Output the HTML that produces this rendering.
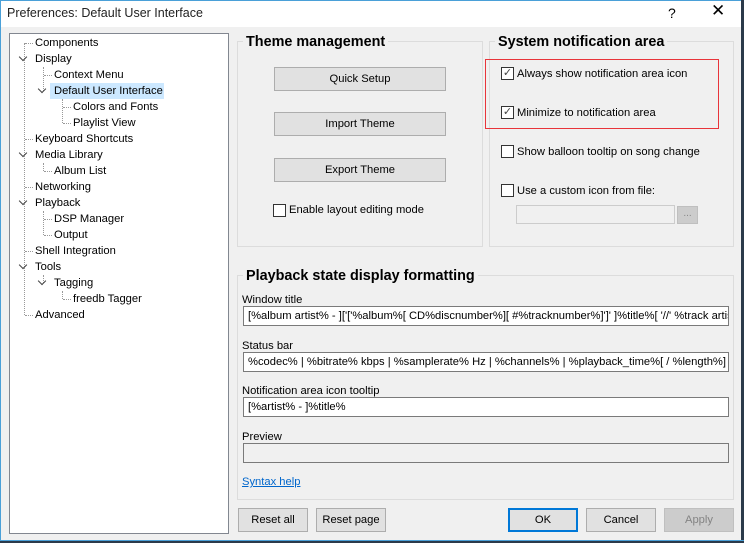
<!DOCTYPE html>
<html><head><style>
*{box-sizing:border-box}
body{margin:0;width:744px;height:543px;position:relative;background:#f0f0f0;font-family:"Liberation Sans",sans-serif;font-size:11.2px;color:#000;overflow:hidden}
.a{position:absolute}
.t{white-space:nowrap;line-height:16px}
.btn{position:absolute;background:#e1e1e1;border:1px solid #adadad;text-align:center;line-height:22px;font-size:11.2px}
.grp{position:absolute;border:1px solid #dcdcdc}
.gt{position:absolute;background:#f0f0f0;font-weight:bold;font-size:14.4px;padding:0 3px;line-height:18px}
.cb{position:absolute;width:13px;height:13px;border:1px solid #333;background:#fff}
.inp{position:absolute;background:#fff;border:1px solid #7a7a7a;height:20px;line-height:18px;padding-left:4px;white-space:nowrap;overflow:hidden;font-size:11.2px}
.chev{position:absolute;width:6px;height:6px;border-right:1.5px solid #444;border-bottom:1.5px solid #444;transform:rotate(45deg)}
.dv{position:absolute;border-left:1px dotted #999}
.dh{position:absolute;border-top:1px dotted #999;width:8px}
</style></head><body>
<div class="a" style="left:0;top:0;width:744px;height:27px;background:#fff;border-top:1px solid #4aa0d8"></div>
<div class="a t" style="left:7px;top:5px;font-size:12.5px;color:#222">Preferences: Default User Interface</div>
<div class="a t" style="left:668px;top:5px;font-size:14px">?</div>
<div class="a t" style="left:711px;top:3px;font-size:17px">✕</div>
<div class="a" style="left:0;top:0;width:1px;height:543px;background:#4aa0d8"></div>
<div class="a" style="left:741px;top:0;width:3px;height:543px;background:#2b3a4a"></div>
<div class="a" style="left:0;top:540px;width:744px;height:1px;background:#4aa0d8"></div>
<div class="a" style="left:0;top:541px;width:744px;height:2px;background:#2b3a4a"></div>

<!-- tree -->
<div class="a" style="left:9px;top:33px;width:220px;height:501px;background:#fff;border:1px solid #828790"></div>
<div class="a" style="left:50px;top:83px;width:114px;height:16px;background:#cce8ff"></div>
<div class="dv" style="left:24px;top:43px;height:272px"></div>
<div class="dv" style="left:43px;top:67px;height:24px"></div>
<div class="dv" style="left:62px;top:99px;height:24px"></div>
<div class="dv" style="left:43px;top:163px;height:8px"></div>
<div class="dv" style="left:43px;top:211px;height:24px"></div>
<div class="dv" style="left:43px;top:275px;height:8px"></div>
<div class="dv" style="left:62px;top:291px;height:8px"></div>
<div class="dh" style="left:25px;top:43px"></div><div class="dh" style="left:25px;top:139px"></div><div class="dh" style="left:25px;top:187px"></div><div class="dh" style="left:25px;top:251px"></div><div class="dh" style="left:25px;top:315px"></div>
<div class="dh" style="left:44px;top:75px"></div><div class="dh" style="left:44px;top:171px"></div><div class="dh" style="left:44px;top:219px"></div><div class="dh" style="left:44px;top:235px"></div>
<div class="dh" style="left:63px;top:107px"></div><div class="dh" style="left:63px;top:123px"></div><div class="dh" style="left:63px;top:299px"></div>
<div class="chev" style="left:20px;top:54px"></div><div class="chev" style="left:39px;top:86px"></div><div class="chev" style="left:20px;top:150px"></div><div class="chev" style="left:20px;top:198px"></div><div class="chev" style="left:20px;top:262px"></div><div class="chev" style="left:39px;top:278px"></div>
<div class="a t" style="left:35px;top:35px">Components</div>
<div class="a t" style="left:35px;top:51px">Display</div>
<div class="a t" style="left:54px;top:67px">Context Menu</div>
<div class="a t" style="left:54px;top:83px">Default User Interface</div>
<div class="a t" style="left:73px;top:99px">Colors and Fonts</div>
<div class="a t" style="left:73px;top:115px">Playlist View</div>
<div class="a t" style="left:35px;top:131px">Keyboard Shortcuts</div>
<div class="a t" style="left:35px;top:147px">Media Library</div>
<div class="a t" style="left:54px;top:163px">Album List</div>
<div class="a t" style="left:35px;top:179px">Networking</div>
<div class="a t" style="left:35px;top:195px">Playback</div>
<div class="a t" style="left:54px;top:211px">DSP Manager</div>
<div class="a t" style="left:54px;top:227px">Output</div>
<div class="a t" style="left:35px;top:243px">Shell Integration</div>
<div class="a t" style="left:35px;top:259px">Tools</div>
<div class="a t" style="left:54px;top:275px">Tagging</div>
<div class="a t" style="left:73px;top:291px">freedb Tagger</div>
<div class="a t" style="left:35px;top:307px">Advanced</div>

<!-- theme -->
<div class="grp" style="left:237px;top:41px;width:246px;height:206px"></div>
<div class="gt" style="left:243px;top:33px">Theme management</div>
<div class="btn" style="left:274px;top:67px;width:172px;height:24px">Quick Setup</div>
<div class="btn" style="left:274px;top:112px;width:172px;height:24px">Import Theme</div>
<div class="btn" style="left:274px;top:158px;width:172px;height:24px">Export Theme</div>
<div class="cb" style="left:273px;top:204px"></div>
<div class="a t" style="left:289px;top:202px">Enable layout editing mode</div>

<!-- sys -->
<div class="grp" style="left:489px;top:41px;width:245px;height:206px"></div>
<div class="gt" style="left:495px;top:33px">System notification area</div>
<div class="a" style="left:485px;top:59px;width:234px;height:70px;border:1px solid #e8343a"></div>
<div class="cb" style="left:501px;top:67px;font-size:11px;line-height:11px;text-align:center;color:#444">✓</div>
<div class="a t" style="left:517px;top:66px">Always show notification area icon</div>
<div class="cb" style="left:501px;top:106px;font-size:11px;line-height:11px;text-align:center;color:#444">✓</div>
<div class="a t" style="left:517px;top:105px">Minimize to notification area</div>
<div class="cb" style="left:501px;top:145px"></div>
<div class="a t" style="left:517px;top:144px">Show balloon tooltip on song change</div>
<div class="cb" style="left:501px;top:184px"></div>
<div class="a t" style="left:517px;top:183px">Use a custom icon from file:</div>
<div class="a" style="left:516px;top:205px;width:159px;height:19px;background:#f0f0f0;border:1px solid #ccc"></div>
<div class="a" style="left:677px;top:206px;width:21px;height:18px;background:#ccc;border:1px solid #bfbfbf;color:#888;font-size:10px;text-align:center;line-height:14px">...</div>

<!-- playback -->
<div class="grp" style="left:237px;top:275px;width:497px;height:225px"></div>
<div class="gt" style="left:243px;top:267px">Playback state display formatting</div>
<div class="a t" style="left:242px;top:292px">Window title</div>
<div class="inp" style="left:243px;top:306px;width:486px">[%album artist% - ]['['%album%[ CD%discnumber%][ #%tracknumber%]']' ]%title%[ '//' %track artist%]</div>
<div class="a t" style="left:242px;top:338px">Status bar</div>
<div class="inp" style="left:243px;top:352px;width:486px">%codec% | %bitrate% kbps | %samplerate% Hz | %channels% | %playback_time%[ / %length%]</div>
<div class="a t" style="left:242px;top:383px">Notification area icon tooltip</div>
<div class="inp" style="left:243px;top:397px;width:486px">[%artist% - ]%title%</div>
<div class="a t" style="left:242px;top:429px">Preview</div>
<div class="a" style="left:243px;top:443px;width:486px;height:20px;background:#f0f0f0;border:1px solid #7a7a7a"></div>
<div class="a t" style="left:242px;top:474px;color:#0066cc;text-decoration:underline">Syntax help</div>

<div class="btn" style="left:238px;top:508px;width:70px;height:24px">Reset all</div>
<div class="btn" style="left:316px;top:508px;width:70px;height:24px">Reset page</div>
<div class="btn" style="left:508px;top:508px;width:70px;height:24px;border:2px solid #0078d7;line-height:20px">OK</div>
<div class="btn" style="left:586px;top:508px;width:70px;height:24px">Cancel</div>
<div class="btn" style="left:664px;top:508px;width:70px;height:24px;background:#ccc;border-color:#bfbfbf;color:#838383">Apply</div>
</body></html>
